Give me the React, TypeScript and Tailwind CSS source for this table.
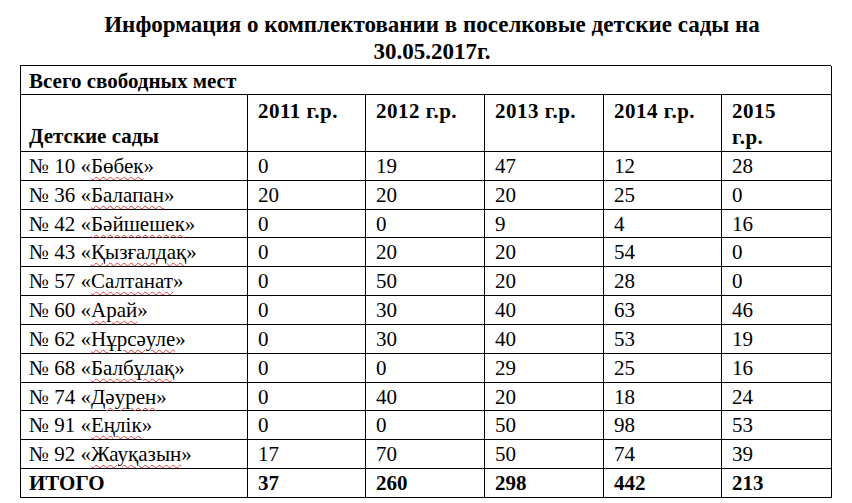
import React from 'react';

const years = ['2011', '2012', '2013', '2014', '2015'];

const rows: { num: string; name: string; values: number[] }[] = [
  { num: '10', name: 'Бөбек', values: [0, 19, 47, 12, 28] },
  { num: '36', name: 'Балапан', values: [20, 20, 20, 25, 0] },
  { num: '42', name: 'Бәйшешек', values: [0, 0, 9, 4, 16] },
  { num: '43', name: 'Қызғалдақ', values: [0, 20, 20, 54, 0] },
  { num: '57', name: 'Салтанат', values: [0, 50, 20, 28, 0] },
  { num: '60', name: 'Арай', values: [0, 30, 40, 63, 46] },
  { num: '62', name: 'Нұрсәуле', values: [0, 30, 40, 53, 19] },
  { num: '68', name: 'Балбұлақ', values: [0, 0, 29, 25, 16] },
  { num: '74', name: 'Дәурен', values: [0, 40, 20, 18, 24] },
  { num: '91', name: 'Еңлік', values: [0, 0, 50, 98, 53] },
  { num: '92', name: 'Жауқазын', values: [17, 70, 50, 74, 39] },
];

const totals = [37, 260, 298, 442, 213];

// every cell draws its own right and bottom rule; the grid draws top and left
const cell = 'border-r border-b border-black pt-[2px] leading-[24px] whitespace-nowrap';

export default function App() {
  return (
    <div className="w-[852px] h-[503px] bg-white text-black font-serif overflow-hidden">
      <div className="font-['Liberation_Serif'] pt-[11px] pl-[12px] text-center text-[23px] leading-[27px] font-bold">
        Информация о комплектовании в поселковые детские сады на
        <br />
        30.05.2017г.
      </div>

      <div className="font-['Liberation_Serif'] ml-[20px] w-[811px] grid grid-cols-[227px_118px_119px_119px_118px_110px] grid-rows-[29px_57px_repeat(12,28.83px)] border-t border-l border-black text-[21px]">
        <div className="col-span-6 border-r border-b border-black pl-[8px] pt-[3px] leading-[24px] font-bold">
          Всего свободных мест
        </div>

        <div className="border-r border-b border-black pl-[8px] pt-[28px] leading-[26px] font-bold">
          Детские сады
        </div>
        {years.map((y) => (
          <div
            key={y}
            className="border-r border-b border-black pl-[10px] pt-[3px] leading-[26px] font-bold whitespace-nowrap tracking-[0.5px]"
          >
            {y === '2015' ? (
              <>
                2015
                <br />
                г.р.
              </>
            ) : (
              `${y} г.р.`
            )}
          </div>
        ))}

        {rows.map((r) => (
          <React.Fragment key={r.num}>
            <div className={`${cell} pl-[8px]`}>
              № {r.num} «
              <span className="underline decoration-wavy decoration-[#e23b3b] decoration-1 underline-offset-[3px]">
                {r.name}
              </span>
              »
            </div>
            {r.values.map((v, i) => (
              <div key={i} className={`${cell} pl-[10px]`}>
                {v}
              </div>
            ))}
          </React.Fragment>
        ))}

        <div className={`${cell} pl-[8px] font-bold`}>ИТОГО</div>
        {totals.map((t, i) => (
          <div key={i} className={`${cell} pl-[10px] font-bold`}>
            {t}
          </div>
        ))}
      </div>
    </div>
  );
}
